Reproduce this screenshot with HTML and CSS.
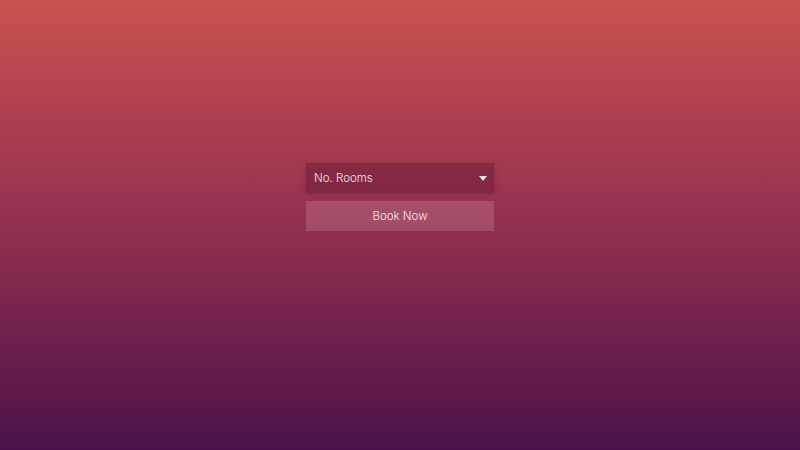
FILE: index.html
```html
<!DOCTYPE html>
<html>
<head>
<meta charset="utf-8">
<link rel="stylesheet" href="styles.css">
</head>
<body>
<main class="page">
  <form class="booking">
    <div class="select">
      <span class="select-label">No. Rooms</span>
      <span class="caret"></span>
    </div>
    <button type="button" class="book">Book Now</button>
  </form>
</main>
</body>
</html>
```
FILE: styles.css
```css
html, body {
  margin: 0;
  height: 100%;
}
body {
  background: linear-gradient(to bottom, #ca524f 0%, #93304f 50%, #4a1249 100%);
  font-family: "Inter", "Open Sans", sans-serif;
  color: #fff;
}
.page {
  height: 100%;
  display: flex;
  align-items: center;
  justify-content: center;
}
.booking {
  width: 188px;
  display: flex;
  flex-direction: column;
  gap: 8px;
  margin-top: -56px;
}
.select {
  height: 30px;
  box-sizing: border-box;
  display: flex;
  align-items: center;
  justify-content: space-between;
  padding: 0 7px 0 8px;
  background: rgba(70, 10, 40, 0.3);
  box-shadow: 0 2px 6px rgba(60, 0, 30, 0.2);
  font-size: 11.5px;
  font-weight: 300;
  color: #f4e6ea;
}
.caret {
  width: 0;
  height: 0;
  border-left: 4.5px solid transparent;
  border-right: 4.5px solid transparent;
  border-top: 5px solid #f4e6ea;
}
.book {
  height: 30px;
  border: 0;
  background: rgba(255, 255, 255, 0.14);
  color: #f6eaee;
  font-family: inherit;
  font-size: 11.5px;
  font-weight: 300;
  padding: 0;
}
```
